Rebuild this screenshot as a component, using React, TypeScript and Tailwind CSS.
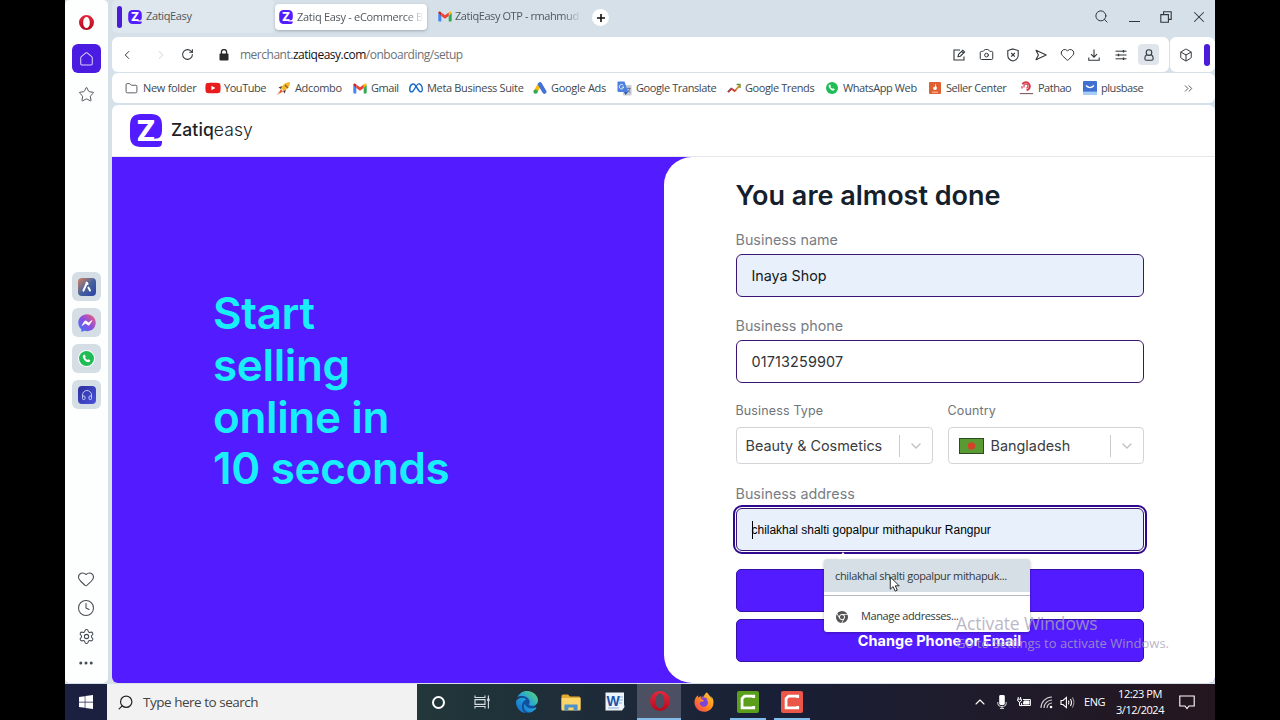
import type { ReactNode } from "react";
import {
  Box,
  Camera,
  ChevronDown,
  ChevronLeft,
  ChevronRight,
  ChevronsRight,
  ChevronUp,
  Clock4,
  Ellipsis,
  Folder,
  Headphones,
  Heart,
  RotateCw,
  Search,
  Settings,
  Star,
  X,
} from "lucide-react";
import {
  FaChrome,
  FaEdge,
  FaFacebookMessenger,
  FaFirefoxBrowser,
  FaMeta,
  FaWindows,
  FaYoutube,
} from "react-icons/fa6";

/* ---------- Logos ---------- */

function ZatiqLogo({ className }: { className: string }) {
  return (
    <svg viewBox="0 0 32 33" className={className}>
      <path
        d="M11 0H21Q32 0 32 11V17Q32 24.4 25 24.8H22V27H32V28.5Q32 33 27.5 33H11Q0 33 0 22V11Q0 0 11 0Z"
        fill="#531bff"
      />
      <text
        x="16"
        y="26.6"
        textAnchor="middle"
        fontFamily="Inter, sans-serif"
        fontSize="28"
        fontWeight="800"
        fill="#fff"
      >
        Z
      </text>
    </svg>
  );
}

function GmailLogo() {
  return (
    <svg viewBox="0 0 14 11" className="w-[14px] h-[11px]">
      <path d="M0.3 2V9.8Q0.3 10.6 1.1 10.6H3.3V4.6Z" fill="#4285f4" />
      <path d="M13.7 2V9.8Q13.7 10.6 12.9 10.6H10.7V4.6Z" fill="#34a853" />
      <path d="M10.7 1.6L12 0.6Q13.7 0 13.7 2L10.7 5Z" fill="#fbbc04" />
      <path d="M3.3 1.6L2 0.6Q0.3 0 0.3 2L3.3 5Z" fill="#c5221f" />
      <path d="M3.3 1.4L7 4.2L10.7 1.4V5L7 7.8L3.3 5Z" fill="#ea4335" />
    </svg>
  );
}

function OperaLogo({ className }: { className: string }) {
  return (
    <svg viewBox="0 0 20 20" className={className}>
      <defs>
        <linearGradient id="opera" x1="0" y1="0" x2="0" y2="1">
          <stop offset="0" stopColor="#e8283c" />
          <stop offset="1" stopColor="#b5081e" />
        </linearGradient>
      </defs>
      <path
        fillRule="evenodd"
        fill="url(#opera)"
        d="M10 0A10 10 0 1 0 10 20A10 10 0 1 0 10 0ZM10 2.6C12.6 2.6 14.4 5.8 14.4 10S12.6 17.4 10 17.4S5.6 14.2 5.6 10S7.4 2.6 10 2.6Z"
      />
    </svg>
  );
}

function AdcomboLogo() {
  return (
    <svg viewBox="0 0 15 15" className="size-[15px]">
      <path d="M14 1Q8 1 5 7L8 10Q14 7 14 1Z" fill="#f5b72b" />
      <path d="M6 5L2.5 6.5L5 8ZM10 9L8.5 12.5L7 10Z" fill="#4b3a3a" />
      <path d="M9 4L12 7" stroke="#8a6420" strokeWidth="1.4" />
      <path d="M5 8L1 14L7 10.5Z" fill="#ec5a2b" />
      <path d="M3.6 10.6L1.5 13.5" stroke="#f7c0a5" />
    </svg>
  );
}

function AdsLogo() {
  return (
    <svg viewBox="0 0 14 12" className="w-[14px] h-[12px]">
      <path d="M2.6 9.6L6.6 2.4" stroke="#fbbc04" strokeWidth="4" />
      <path d="M7 2.3L11.4 9.7" stroke="#4472d8" strokeWidth="4.2" strokeLinecap="round" />
      <circle cx="2.6" cy="9.6" r="2.2" fill="#34a853" />
    </svg>
  );
}

function TranslateLogo() {
  return (
    <svg viewBox="0 0 15 15" className="size-[15px]">
      <rect x="6" y="4" width="8.6" height="10.6" rx="1" fill="#c9cdd4" />
      <path d="M1 0.5H7.5L11 11H1.5Q0.5 11 0.5 10V1Z" fill="#4a80e0" />
      <path d="M7 11H11L8.6 14Z" fill="#2b58b0" />
      <path d="M6.3 4.4A2.2 2.2 0 1 0 6.7 6.1H4.8" fill="none" stroke="#fff" strokeWidth="0.9" />
      <path d="M9.6 7.4H13.6M11.6 6.6V7.4M13 7.6Q12.4 10 10.4 11.4M10.4 8.6Q11.4 10.6 13.4 11.6" fill="none" stroke="#5570a0" strokeWidth="0.9" />
    </svg>
  );
}

function TrendsLogo() {
  return (
    <svg viewBox="0 0 14 11" className="w-[14px] h-[11px]" fill="none" strokeWidth="1.7">
      <path d="M0.8 9L4.4 5.4" stroke="#3f7be8" />
      <path d="M1.2 9.2L4.6 5.6L7.6 8L9 6.6" stroke="#c93b30" />
      <path d="M8.4 7.2L12.4 2.8" stroke="#c9862a" />
      <path d="M9.6 1.5H13V5" stroke="#6d8f2e" strokeWidth="1.4" />
    </svg>
  );
}

function WhatsappLogo({ className }: { className: string }) {
  return (
    <span className={`flex items-center justify-center rounded-full bg-[#1fbd55] ${className}`}>
      <svg viewBox="0 0 10 10" className="size-[60%]">
        <path
          d="M1.6 1.2Q2.6 0 3.3 1.2L4 2.8Q4.2 3.4 3.4 4Q4.2 5.8 6 6.6Q6.6 5.7 7.2 6L8.8 6.8Q9.8 7.5 8.6 8.6Q7 9.8 4.4 8.2Q1.8 6.4 0.9 3.6Q0.7 2.2 1.6 1.2Z"
          fill="#fff"
        />
      </svg>
    </span>
  );
}

function SellerLogo() {
  return (
    <svg viewBox="0 0 12 12" className="size-[12px]">
      <rect width="12" height="12" rx="1" fill="#e2602f" />
      <path d="M6.5 1.5Q7.5 3 7 4.2Q8.6 5.2 7.6 7.2Q6.6 8.6 5 7.8Q3.4 6.6 4.6 4.8L5.2 5.4Q6.6 4 6.5 1.5Z" fill="#fff" />
      <path d="M3 10.2H9" stroke="#fbd3c2" strokeWidth="0.9" />
    </svg>
  );
}

function PathaoLogo() {
  return (
    <svg viewBox="0 0 15 14" className="w-[15px] h-[14px]">
      <path d="M3.4 3.2A4 4 0 1 1 7.6 9.2" fill="none" stroke="#d8394a" strokeWidth="2" />
      <path d="M5 6.6V5.4A2 2 0 1 1 7.4 7" fill="none" stroke="#dd5363" strokeWidth="1.3" />
      <path d="M3 5.2V7.6" stroke="#d8394a" strokeWidth="1.3" />
      <path d="M0.8 12.6H14.2" stroke="#7d5a60" strokeWidth="1.1" />
    </svg>
  );
}

function PlusbaseLogo() {
  return (
    <svg viewBox="0 0 14 14" className="size-[14px]">
      <rect width="14" height="14" rx="1" fill="#3f6fd0" />
      <rect y="10.6" width="14" height="3.4" fill="#a6cdf5" />
      <path d="M3 4.6Q7 8.6 11 4.6" fill="none" stroke="#fff" strokeWidth="1.4" />
    </svg>
  );
}

/* ---------- Browser sidebar ---------- */

function SidebarApp({ children }: { children: ReactNode }) {
  return (
    <div className="flex size-[29px] items-center justify-center rounded-[6px] bg-[#d5dee4]">{children}</div>
  );
}

function Sidebar() {
  return (
    <aside className="flex w-[43px] shrink-0 flex-col items-center rounded-[5px] bg-[#fdfefe] text-[#454c52]">
      <OperaLogo className="mt-[15px] size-[15px]" />
      <div className="mt-[14px] flex size-[29px] items-center justify-center rounded-[6px] bg-[#4a1be0]">
        <svg viewBox="0 0 14 15" className="h-[14px] w-[13px]" fill="none" stroke="#dcd2ff" strokeWidth="1.1">
          <path d="M0.8 6.2Q0.8 5.5 1.4 5L6.2 1Q7 0.5 7.8 1L12.6 5Q13.2 5.5 13.2 6.2V12.6Q13.2 13.9 12 13.9H2Q0.8 13.9 0.8 12.6Z" />
        </svg>
      </div>
      <Star className="mt-[13px] size-[17px]" strokeWidth={1.3} />
      <div className="mt-[169px] flex flex-col gap-[7px]">
        <SidebarApp>
          <span className="flex size-[18px] items-center justify-center rounded-[4px] bg-linear-to-br from-[#d97a50] via-[#46629c] to-[#2f40a8]">
            <svg viewBox="0 0 12 12" className="size-[12px]" fill="none" stroke="#fff" strokeLinecap="round" strokeWidth="2">
              <path d="M5.8 2.2L2.4 9.6M7.4 6.6L9 9.4" />
              <path d="M5.6 1.6L6.6 3" />
            </svg>
          </span>
        </SidebarApp>
        <SidebarApp>
          <svg width="0" height="0" className="absolute">
            <linearGradient id="messenger" x1="0" y1="1" x2="1" y2="0">
              <stop offset="0" stopColor="#3a7bff" />
              <stop offset="0.5" stopColor="#8a4fe0" />
              <stop offset="1" stopColor="#ff6070" />
            </linearGradient>
          </svg>
          <span className="flex size-[15px] items-center justify-center rounded-full bg-white">
            <FaFacebookMessenger className="size-[18px] shrink-0" fill="url(#messenger)" />
          </span>
        </SidebarApp>
        <SidebarApp>
          <span className="rounded-full bg-white p-px">
            <WhatsappLogo className="size-[15px]" />
          </span>
        </SidebarApp>
        <SidebarApp>
          <span className="flex size-[18px] items-center justify-center rounded-[4px] bg-linear-to-br from-[#2d2f9e] to-[#4a52dd]">
            <Headphones className="size-[12px] text-[#cfd4ff]" strokeWidth={1.8} />
          </span>
        </SidebarApp>
      </div>
      <Heart className="mt-[161px] mr-px size-[18px]" strokeWidth={1.4} />
      <Clock4 className="mt-[11px] mr-px size-[18px]" strokeWidth={1.4} />
      <Settings className="mt-[11px] mr-px size-[17px]" strokeWidth={1.5} />
      <Ellipsis className="mt-[9px] mr-px size-[18px]" strokeWidth={2} />
    </aside>
  );
}

/* ---------- Browser chrome ---------- */

function TabBar() {
  return (
    <div className="flex h-[37px] items-start text-[11px] text-[#51585e]">
      <div className="flex h-[33px] w-[163px] items-center rounded-[5px] bg-[#dee6ee] pl-[5px]">
        <span className="h-[22px] w-[5px] rounded-[3px] bg-[#4a1bd8]" />
        <ZatiqLogo className="ml-[6px] size-[14px]" />
        <span className="ml-[4px] tracking-[-0.35px]">ZatiqEasy</span>
      </div>
      <div className="mt-[4px] flex h-[26px] w-[152px] items-center rounded-[4px] bg-white pl-[4px] shadow-[0_1px_3px_rgba(60,70,80,0.35)]">
        <ZatiqLogo className="size-[14px] shrink-0" />
        <span className="ml-[4px] w-[127px] whitespace-nowrap tracking-[-0.3px] mask-r-from-85%">
          Zatiq Easy - eCommerce B
        </span>
      </div>
      <div className="flex h-[33px] items-center pl-[11px]">
        <GmailLogo />
        <span className="ml-[3px] w-[127px] whitespace-nowrap tracking-[-0.42px] mask-r-from-85%">
          ZatiqEasy OTP - rmahmud
        </span>
      </div>
      <div className="ml-[10px] mt-[9px] flex size-[17px] items-center justify-center rounded-full bg-white">
        <svg viewBox="0 0 8 8" className="size-[8px]" stroke="#111" strokeWidth="1.6">
          <path d="M4 0V8M0 4H8" />
        </svg>
      </div>
      <div className="ml-auto flex h-[33px] items-center pr-[7px] text-[#30363b]">
        <Search className="size-[15px]" strokeWidth={1.6} />
        <span className="ml-[20px] mt-[10px] h-px w-[11px] bg-[#30363b]" />
        <svg viewBox="0 0 12 12" className="ml-[20px] size-[12px]" fill="none" stroke="currentColor" strokeWidth="1.1">
          <path d="M0.8 3.6H8.4V11.2H0.8ZM3.6 3.4V0.8H11.2V8.4H8.6" />
        </svg>
        <X className="ml-[18px] size-[18px]" strokeWidth={1.4} />
      </div>
    </div>
  );
}

function AddressBar() {
  return (
    <div className="flex h-[35px] gap-px">
      <div className="flex flex-1 items-center rounded-[6px] bg-white pl-[8px] text-[#30363b]">
        <ChevronLeft className="size-[14px]" strokeWidth={1.7} />
        <ChevronRight className="ml-[20px] size-[14px] text-[#cdd2d6]" strokeWidth={1.7} />
        <RotateCw className="ml-[13px] size-[13px]" strokeWidth={1.9} />
        <svg viewBox="0 0 10 12" className="ml-[25px] h-[12px] w-[10px]">
          <rect x="0.5" y="4.6" width="9" height="7" rx="1" fill="#26292c" />
          <path d="M2.4 5V3.2A2.6 2.6 0 0 1 7.6 3.2V5" fill="none" stroke="#26292c" strokeWidth="1.3" />
        </svg>
        <span className="ml-[11px] text-[12px] tracking-[-0.49px] text-[#6c7276]">
          merchant.<span className="text-[#111]">zatiqeasy.com</span>/onboarding/setup
        </span>
        <div className="ml-auto flex items-center pr-[10px]">
          {/* snapshot */}
          <svg viewBox="0 0 13 12" className="h-[12px] w-[13px]" fill="none" stroke="currentColor" strokeWidth="1.1">
            <path d="M7 1H1V11H11V7.5M5 7.6L5.6 5.4L9.8 1.2L11.6 3L7.4 7.2ZM8.6 2.4L10.4 4.2" />
          </svg>
          <Camera className="ml-[13px] size-[15px]" strokeWidth={1.6} />
          {/* ad blocker shield */}
          <svg viewBox="0 0 12 14" className="ml-[13px] h-[14px] w-[12px]" fill="none" stroke="currentColor" strokeWidth="1.1">
            <path d="M6 0.9L11.2 2.6V7.4Q11.2 11.4 6 13.1Q0.8 11.4 0.8 7.4V2.6Z" />
            <path d="M4.2 5L7.8 8.6M7.8 5L4.2 8.6" />
          </svg>
          <svg viewBox="0 0 12 12" className="ml-[16px] size-[12px]" fill="none" stroke="currentColor" strokeWidth="1.1" strokeLinejoin="round">
            <path d="M1 1.2L11.2 6L1 10.8L3.4 6Z" />
          </svg>
          <Heart className="ml-[13px] size-[15px]" strokeWidth={1.6} />
          <svg viewBox="0 0 12 12" className="ml-[13px] size-[12px]" fill="none" stroke="currentColor" strokeWidth="1.1">
            <path d="M6 0.5V8M3 5.2L6 8.2L9 5.2M0.8 8.6V11.2H11.2V8.6" />
          </svg>
          <svg viewBox="0 0 12 12" className="ml-[15px] size-[12px]" stroke="currentColor" strokeWidth="1">
            <path d="M0.5 2.2H11.5M0.5 6H11.5M0.5 9.8H11.5" />
            <path d="M8.5 0.9V3.5M3.5 4.7V7.3M8.5 8.5V11.1" strokeWidth="1.4" />
          </svg>
          <span className="ml-[11px] flex size-[21px] items-center justify-center rounded-[4px] bg-[#dfe5ea]">
            <svg viewBox="0 0 10 12" className="h-[12px] w-[10px]" fill="none" stroke="currentColor" strokeWidth="1.1">
              <circle cx="5" cy="3.6" r="2.8" />
              <path d="M2.8 5.8Q0.8 6.8 0.8 9.4Q0.8 11.2 2.4 11.2H7.6Q9.2 11.2 9.2 9.4Q9.2 6.8 7.2 5.8" />
            </svg>
          </span>
        </div>
      </div>
      <div className="flex w-[45px] items-center rounded-[6px] bg-white pl-[9px] text-[#30363b]">
        <Box className="size-[14px]" strokeWidth={1.7} />
        <span className="ml-[11px] h-[22px] w-[6px] rounded-[3px] bg-[#4a1bd8]" />
      </div>
    </div>
  );
}

const bookmarks = [
  { label: "New folder", slot: "w-[81px]", icon: <Folder className="size-[13px]" strokeWidth={1.6} />, text: "tracking-[-0.3px]" },
  { label: "YouTube", slot: "w-[71px]", icon: <FaYoutube className="size-[16px] shrink-0 text-[#e81c1c]" />, text: "tracking-[-0.45px]" },
  { label: "Adcombo", slot: "w-[76px]", icon: <AdcomboLogo />, text: "tracking-[-0.35px]" },
  { label: "Gmail", slot: "w-[56px]", icon: <GmailLogo />, text: "tracking-[-0.45px]" },
  { label: "Meta Business Suite", slot: "w-[124px]", icon: <FaMeta className="size-[14px] text-[#1769c8]" />, text: "tracking-[-0.33px]" },
  { label: "Google Ads", slot: "w-[85px]", icon: <AdsLogo />, text: "tracking-[-0.3px]" },
  { label: "Google Translate", slot: "w-[109px]", icon: <TranslateLogo />, text: "tracking-[-0.4px]" },
  { label: "Google Trends", slot: "w-[98px]", icon: <TrendsLogo />, text: "tracking-[-0.4px]" },
  { label: "WhatsApp Web", slot: "w-[103px]", icon: <WhatsappLogo className="size-[12px]" />, text: "tracking-[-0.4px]" },
  { label: "Seller Center", slot: "w-[92px]", icon: <SellerLogo />, text: "tracking-[-0.42px]" },
  { label: "Pathao", slot: "w-[63px]", icon: <PathaoLogo />, text: "tracking-[-0.5px]" },
  { label: "plusbase", slot: "w-[90px]", icon: <PlusbaseLogo />, text: "tracking-[-0.45px]" },
];

function BookmarksBar() {
  return (
    <div className="mt-px flex h-[30px] items-center rounded-[6px] bg-white pl-[12px] text-[11px] text-[#41474c]">
      {bookmarks.map((item) => (
        <div key={item.label} className={`flex shrink-0 items-center gap-[4px] whitespace-nowrap ${item.slot}`}>
          <span className="flex w-[15px] shrink-0 justify-center">{item.icon}</span>
          <span className={item.text}>{item.label}</span>
        </div>
      ))}
      <ChevronsRight className="ml-[10px] size-[13px]" strokeWidth={1.6} />
    </div>
  );
}

/* ---------- Page ---------- */

function SelectArrow() {
  return (
    <>
      <span className="ml-auto h-[22px] w-px bg-[#cccccc]" />
      <span className="flex w-[32px] justify-center">
        <ChevronDown className="size-[16px] text-[#c3c3c3]" strokeWidth={2.2} />
      </span>
    </>
  );
}

function AddressDropdown() {
  return (
    <div className="absolute left-[88.5px] top-[51px] z-10 h-[73px] w-[206px] rounded-[3px] bg-white font-['Open_Sans',sans-serif] text-[11px] text-[#33383c] shadow-[0_1px_3px_rgba(0,0,0,0.3)]">
      <span className="absolute -top-[7px] left-[14px] border-x-[5px] border-b-[7px] border-x-transparent border-b-white" />
      <div className="flex h-[33px] items-center whitespace-nowrap rounded-t-[3px] bg-[#d6dfe5] pl-[11px] pt-px tracking-[-0.36px]">
        chilakhal shalti gopalpur mithapuk...
      </div>
      <div className="mt-[3px] h-px bg-[#b4babe]" />
      <div className="flex h-[41px] items-center whitespace-nowrap pl-[12px] tracking-[-0.38px]">
        <FaChrome className="mr-[13px] size-[12px] text-[#555]" />
        Manage addresses...
      </div>
      <svg viewBox="0 0 12 18" className="absolute left-[65px] top-[17px] h-[17px] w-[12px]">
        <path d="M1 1V14L4 11.2L6.2 16L8.4 15L6.3 10.4H10.4Z" fill="#fff" stroke="#222" strokeWidth="1" />
      </svg>
    </div>
  );
}

function SetupForm() {
  return (
    <div className="flex w-[408px] flex-col">
      <h1 className="h-[40px] whitespace-nowrap text-[27px] font-semibold leading-[40px] text-[#14202b]">
        You are almost done
      </h1>
      <label className="mt-[14px] h-[20px] text-[14.3px] leading-[20px] tracking-[0.03px] text-[#787d84]">Business name</label>
      <div className="mt-[4px] flex h-[43px] items-center rounded-[6px] border border-[#3a1672] bg-[#e7f0fb] pl-[15px] text-[14.3px] text-[#15181c]">
        Inaya Shop
      </div>
      <label className="mt-[19px] h-[20px] text-[14.3px] leading-[20px] tracking-[0.03px] text-[#787d84]">Business phone</label>
      <div className="mt-[4px] flex h-[43px] items-center rounded-[6px] border border-[#3a1672] bg-white pl-[15px] text-[14.4px] tracking-[0.15px] text-[#303338]">
        01713259907
      </div>
      <div className="mt-[18px] flex gap-[15px]">
        <div className="w-[197px]">
          <div className="h-[20px] text-[12.5px] leading-[20px] tracking-[0.15px] text-[#6f747b]">Business Type</div>
          <div className="mt-[6px] flex h-[37px] items-center whitespace-nowrap rounded-[4px] border border-[#d2d4d8] pl-[9px] text-[14.4px] text-[#3a3d41]">
            Beauty &amp; Cosmetics
            <SelectArrow />
          </div>
        </div>
        <div className="w-[196px]">
          <div className="h-[20px] text-[12.5px] leading-[20px] tracking-[0.15px] text-[#6f747b]">Country</div>
          <div className="mt-[6px] flex h-[37px] items-center whitespace-nowrap rounded-[4px] border border-[#d2d4d8] pl-[10px] text-[14.4px] text-[#3a3d41]">
            <svg viewBox="0 0 25 16" className="mr-[7px] h-[16px] w-[25px]">
              <rect x="0.5" y="0.5" width="24" height="15" fill="#5a9a33" stroke="#2d4a20" />
              <circle cx="12.5" cy="8" r="3.7" fill="#d2432a" />
            </svg>
            Bangladesh
            <SelectArrow />
          </div>
        </div>
      </div>
      <label className="mt-[20px] h-[20px] text-[14.3px] leading-[20px] tracking-[0.03px] text-[#787d84]">Business address</label>
      <div className="relative mt-[4px]">
        <div className="flex h-[43px] items-center rounded-[6px] border border-[#3a1672] bg-[#e7f0fb] pl-[15px] font-['Liberation_Sans',Arial,sans-serif] text-[12px] tracking-[-0.02px] text-black outline-2 outline-offset-1 outline-[#2f0a8c]">
          <span className="-mr-px h-[18px] w-px bg-black" />
          chilakhal shalti gopalpur mithapukur Rangpur
        </div>
        <AddressDropdown />
      </div>
      <button className="mt-[18px] h-[43px] rounded-[5px] border border-[#3510a8] bg-[#531bff]" />
      <button className="mt-[7px] h-[43px] rounded-[5px] border border-[#3510a8] bg-[#531bff] text-[14.5px] font-bold text-white">
        Change Phone or Email
      </button>
    </div>
  );
}

function SetupPage() {
  return (
    <main className="mt-[2px] flex h-[578px] flex-col overflow-hidden rounded-[6px] bg-white font-['Inter',sans-serif]">
      <header className="flex h-[52px] shrink-0 items-center border-b border-[#e6e7ea] pl-[18px]">
        <ZatiqLogo className="h-[33px] w-[32px]" />
        <span className="ml-[9px] text-[17.5px] font-medium tracking-[0.1px] text-[#202124]">
          Zatiq<span className="font-light">easy</span>
        </span>
      </header>
      <div className="flex flex-1 bg-[#531bff]">
        <div className="w-[551.5px] shrink-0 pl-[101px] pt-[131px]">
          <p className="w-[260px] text-[44px] font-semibold leading-[51.8px] tracking-[-0.35px] text-[#19eefb]">
            Start
            <br />
            selling
            <br />
            online in
            <br />
            10 seconds
          </p>
        </div>
        <div className="flex-1 rounded-l-[28px] bg-white pl-[72px] pt-[19px]">
          <SetupForm />
        </div>
      </div>
    </main>
  );
}

/* ---------- Windows taskbar ---------- */

function Camtasia({ tile }: { tile: string }) {
  return (
    <span className={`flex size-[22px] items-center justify-center rounded-[2px] ${tile}`}>
      <svg viewBox="0 0 14 14" className="size-[16px]" fill="none" stroke="#fff" strokeWidth="2.4">
        <path d="M12 3.4V1.8H4L1.8 4V12.2H12V10.6" />
      </svg>
    </span>
  );
}

function TaskSlot({ children, state = "" }: { children: ReactNode; state?: string }) {
  return <div className={`flex h-full w-[44px] items-center justify-center ${state}`}>{children}</div>;
}

function Taskbar() {
  return (
    <footer className="flex h-[36px] bg-[#1b2040] font-['Open_Sans',sans-serif]">
      <div className="flex w-[42px] items-center justify-center">
        <FaWindows className="size-[16px] text-white" />
      </div>
      <div className="flex w-[310px] items-center bg-[#f2f2f2] pl-[10px] text-[13.5px] text-[#444]">
        <Search className="size-[17px] -scale-x-100 text-[#222]" strokeWidth={1.7} />
        <span className="ml-[9px] tracking-[-0.48px]">Type here to search</span>
      </div>
      <div className="flex flex-1 items-center bg-linear-to-r from-[#22373a] via-[#191f36] via-45% to-[#24161f]">
        <TaskSlot>
          <span className="mr-[2px] size-[13px] rounded-full border-2 border-white" />
        </TaskSlot>
        <TaskSlot>
          <svg viewBox="0 0 16 14" className="mr-[3px] h-[14px] w-[16px]" fill="none" stroke="#d8dfe2" strokeWidth="1.1">
            <path d="M1 0.5V2.5H11V0.5M1 4.6H11V9.4H1ZM1 13.5V11.5H11V13.5M14.4 0.5V13.5" />
            <path d="M14.4 3.6V6" strokeWidth="2.4" />
          </svg>
        </TaskSlot>
        <TaskSlot>
          <svg width="0" height="0" className="absolute">
            <linearGradient id="edge" x1="0" y1="1" x2="1" y2="0">
              <stop offset="0" stopColor="#1266c4" />
              <stop offset="0.5" stopColor="#23a0dc" />
              <stop offset="1" stopColor="#5fdc6c" />
            </linearGradient>
            <linearGradient id="firefox" x1="0" y1="1" x2="1" y2="0">
              <stop offset="0" stopColor="#f2385a" />
              <stop offset="0.5" stopColor="#ff8a1f" />
              <stop offset="1" stopColor="#ffd83a" />
            </linearGradient>
          </svg>
          <span className="flex size-[22px] items-center justify-center rounded-full bg-[radial-gradient(circle_at_45%_60%,#124f9e_45%,transparent_60%)]">
            <FaEdge className="size-[22px]" fill="url(#edge)" />
          </span>
        </TaskSlot>
        <TaskSlot>
          <svg viewBox="0 0 20 17" className="h-[17px] w-[20px]">
            <path d="M0.5 2Q0.5 0.5 2 0.5H7L9 2.5H18Q19.5 2.5 19.5 4V15H0.5Z" fill="#e5a930" />
            <rect x="0.5" y="4" width="19" height="12.5" rx="0.6" fill="#fbd46b" />
            <path d="M3.4 16.5V10.5H16.6V16.5H12.6V13.6H7.4V16.5Z" fill="#4c90cc" />
          </svg>
        </TaskSlot>
        <TaskSlot>
          <svg viewBox="0 0 20 20" className="size-[20px]">
            <path d="M0.5 0.5H19V12L19.5 15L17 18.5H0.5Z" fill="#eef4fa" />
            <path d="M14 5H18M14 8H18M14 11H17M3 16H14" stroke="#8db2da" />
            <text x="8" y="13.6" textAnchor="middle" fontFamily="Liberation Sans, sans-serif" fontSize="14" fontWeight="700" fill="#1c55a8">
              W
            </text>
          </svg>
        </TaskSlot>
        <TaskSlot state="border-b-2 border-[#84bdec] bg-[#4b5163]">
          <OperaLogo className="ml-px size-[20px]" />
        </TaskSlot>
        <TaskSlot>
          <span className="ml-[2px] flex size-[20px] items-center justify-center rounded-full bg-[radial-gradient(circle,#7a45d8_35%,transparent_50%)]">
            <FaFirefoxBrowser className="size-[20px]" fill="url(#firefox)" />
          </span>
        </TaskSlot>
        <TaskSlot state="relative pl-[2px]">
          <Camtasia tile="bg-[#5a9e1c]" />
          <span className="absolute bottom-0 left-[5px] h-[2px] w-[36px] bg-[#84bdec]" />
        </TaskSlot>
        <TaskSlot state="relative pl-[2px]">
          <Camtasia tile="bg-[#ea5648]" />
          <span className="absolute bottom-0 left-[5px] h-[2px] w-[36px] bg-[#84bdec]" />
        </TaskSlot>
        <div className="ml-auto flex items-center text-white">
          <ChevronUp className="size-[16px]" strokeWidth={1.6} />
          <svg viewBox="0 0 10 14" className="ml-[9px] h-[14px] w-[10px]">
            <rect x="2.2" y="0" width="5.6" height="10" rx="1.4" fill="#fff" />
            <path d="M0.8 7V8.6Q0.8 11 3.4 11.4H6.6Q9.2 11 9.2 8.6V7M5 11.4V13.4M3 13.4H7" fill="none" stroke="#ddd" />
          </svg>
          <svg viewBox="0 0 15 12" className="ml-[10px] h-[12px] w-[15px]" fill="none" stroke="#fff">
            <path d="M6 3.5H13.4V9.5H4.6V7" />
            <path d="M7 5H12V8H6.4Z" fill="#fff" />
            <path d="M1.2 1V3M3.6 1V3M0.6 3.2H4.4V5L2.6 6.2L0.8 5ZM2.5 6V9.6H5" />
          </svg>
          <svg viewBox="0 0 13 13" className="ml-[8px] size-[13px]" fill="none" stroke="#d8d2d6" strokeWidth="1.1">
            <path d="M1 12A11 11 0 0 1 12 1M4 12A8 8 0 0 1 12 4M7 12A5 5 0 0 1 12 7" />
            <circle cx="11" cy="11" r="1.3" fill="#fff" stroke="none" />
          </svg>
          <svg viewBox="0 0 15 13" className="ml-[7px] h-[13px] w-[15px]" fill="none" stroke="#fff" strokeWidth="1.1">
            <path d="M1 4.5H3L6.4 1.4V11.6L3 8.5H1Z" />
            <path d="M8.4 4.6Q9.6 6.5 8.4 8.4M10.4 3Q12.6 6.5 10.4 10" />
            <path d="M12.4 1.4Q15.4 6.5 12.4 11.6" stroke="#8f888c" />
          </svg>
          <span className="ml-[9px] w-[22px] text-[11px] tracking-[-0.4px]">ENG</span>
          <div className="ml-[6px] w-[56px] text-center text-[11px] leading-[16px] tracking-[-0.45px]">
            <div>12:23 PM</div>
            <div>3/12/2024</div>
          </div>
          <svg viewBox="0 0 16 15" className="ml-[11px] mr-[20px] h-[15px] w-[16px]" fill="none" stroke="#fff" strokeWidth="1.1">
            <path d="M0.8 1H15.2V11H10L8 13.6L6 11H0.8Z" />
          </svg>
        </div>
      </div>
    </footer>
  );
}

export default function App() {
  return (
    <div className="h-[720px] w-[1280px] overflow-hidden bg-black px-[65px]">
      <div className="relative flex h-full w-[1150px] flex-col">
        <div className="flex h-[684px] gap-[4px] bg-[#d6e0e8] pb-px font-['Open_Sans',sans-serif]">
          <Sidebar />
          <div className="flex-1">
            <TabBar />
            <AddressBar />
            <BookmarksBar />
            <SetupPage />
          </div>
        </div>
        <Taskbar />
        {/* activation watermark */}
        <div className="pointer-events-none absolute left-[891px] top-[611px] z-20 whitespace-nowrap font-['Open_Sans',sans-serif] text-[#a9a4b8]/80">
          <div className="text-[17.5px] leading-[24px] tracking-[-0.14px]">Activate Windows</div>
          <div className="text-[13px] leading-[17px]">Go to Settings to activate Windows.</div>
        </div>
      </div>
    </div>
  );
}
